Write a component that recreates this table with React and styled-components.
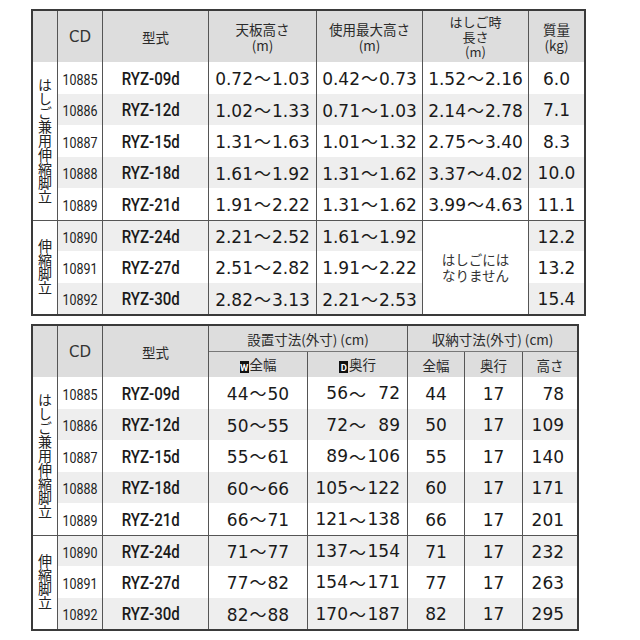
import React from 'react';
import styled, { createGlobalStyle, css } from 'styled-components';

const GlobalStyle = createGlobalStyle`
  *, *::before, *::after { box-sizing: border-box; }
  html, body { margin: 0; padding: 0; background: #ffffff; }
  body {
    font-family: "Noto Sans CJK JP", "Noto Sans", sans-serif;
    color: #1e1e1e;
  }
`;

const Page = styled.div`
  display: flex;
  flex-direction: column;
  align-items: flex-start;
  gap: 8px;
  padding: 9px 0 0 31px;
`;

const Table = styled.table`
  border-collapse: separate;
  border-spacing: 0;
  table-layout: fixed;
  width: ${(p) => p.$width}px;
  border: 2px solid #3a3a3a;
`;

const Col = styled.col`
  width: ${(p) => p.$w}px;
`;

const cellBase = css`
  padding: 0;
  border-right: 1px solid #555;
  text-align: center;
  vertical-align: middle;
  white-space: nowrap;
  &:last-child {
    border-right: none;
  }
`;

const HeadRow = styled.tr`
  height: ${(p) => p.$h}px;
`;

const Th = styled.th`
  ${cellBase};
  background: #dddddd;
  color: #2a2a2a;
  font-family: "Noto Sans CJK JP", sans-serif;
  font-weight: 400;
  font-size: ${(p) => (p.$tight ? 13 : 13.5)}px;
  line-height: ${(p) => (p.$tight ? 15 : 16)}px;
  border-bottom: ${(p) => (p.$underline ? '1px solid #777' : 'none')};
`;

const CdHead = styled.span`
  font-family: "DejaVu Sans", "Noto Sans", sans-serif;
  font-size: 15px;
  color: #333;
`;

const Badge = styled.span`
  display: inline-flex;
  align-items: center;
  justify-content: center;
  width: 9px;
  height: 12px;
  margin-right: 1px;
  background: #111;
  color: #fff;
  font-family: "Roboto", "Liberation Sans", sans-serif;
  font-weight: 700;
  font-size: 9.5px;
  line-height: 1;
  vertical-align: -1px;
  letter-spacing: -0.5px;
`;

const BodyRow = styled.tr`
  height: 31.5px;
  background: ${(p) => (p.$shade ? '#eeeeee' : '#ffffff')};
  & > td {
    border-top: ${(p) => (p.$divider ? '1px solid #555' : 'none')};
  }
`;

const Td = styled.td`
  ${cellBase};
`;

const GroupCell = styled.td`
  ${cellBase};
  background: #ffffff;
`;

const VerticalLabel = styled.div`
  writing-mode: vertical-rl;
  text-orientation: upright;
  margin: 0 auto;
  font-family: "Noto Sans CJK JP", sans-serif;
  font-size: 14px;
  line-height: 1;
  letter-spacing: 0;
  color: #222;
`;

const NoteCell = styled.td`
  ${cellBase};
  background: #ffffff;
  color: #333;
  font-family: "Noto Sans CJK JP", sans-serif;
  font-size: 13.5px;
  line-height: 16px;
`;

const CdText = styled.span`
  display: inline-block;
  transform: scaleX(0.83);
  font-family: "Roboto", "Liberation Sans", sans-serif;
  font-size: 15px;
  color: #222;
`;

const ModelText = styled.span`
  display: inline-block;
  margin-right: ${(p) => p.$shift || 0}px;
  transform: scaleX(0.86);
  font-family: "Roboto", "Liberation Sans", sans-serif;
  font-weight: 500;
  font-size: 17.5px;
  color: #1a1a1a;
`;

const NumText = styled.span`
  display: inline-block;
  font-family: "DejaVu Sans", "Noto Sans CJK JP", sans-serif;
  font-size: 17px;
  color: #1a1a1a;
  text-align: ${(p) => p.$align || 'center'};
  width: 100%;
  padding: ${(p) => (p.$align === 'right' ? '0 13px 0 0' : '0')};
`;

const Wave = styled.span`
  font-family: "Noto Sans CJK JP", sans-serif;
  margin: 0 1px;
`;

const RangeBox = styled.span`
  display: inline-grid;
  grid-template-columns: 33px auto 33px;
  align-items: center;
  font-family: "DejaVu Sans", "Noto Sans CJK JP", sans-serif;
  font-size: 17px;
  color: #1a1a1a;
`;

const RangeNum = styled.span`
  text-align: right;
`;

const W = '\u301C';

const Range = ({ a, b }) => (
  <NumText>
    {a}
    <Wave>{W}</Wave>
    {b}
  </NumText>
);

const AlignedRange = ({ a, b }) => (
  <RangeBox>
    <RangeNum>{a}</RangeNum>
    <Wave>{W}</Wave>
    <RangeNum>{b}</RangeNum>
  </RangeBox>
);

const spec = [
  ['10885', 'RYZ-09d', ['0.72', '1.03'], ['0.42', '0.73'], ['1.52', '2.16'], '6.0'],
  ['10886', 'RYZ-12d', ['1.02', '1.33'], ['0.71', '1.03'], ['2.14', '2.78'], '7.1'],
  ['10887', 'RYZ-15d', ['1.31', '1.63'], ['1.01', '1.32'], ['2.75', '3.40'], '8.3'],
  ['10888', 'RYZ-18d', ['1.61', '1.92'], ['1.31', '1.62'], ['3.37', '4.02'], '10.0'],
  ['10889', 'RYZ-21d', ['1.91', '2.22'], ['1.31', '1.62'], ['3.99', '4.63'], '11.1'],
  ['10890', 'RYZ-24d', ['2.21', '2.52'], ['1.61', '1.92'], null, '12.2'],
  ['10891', 'RYZ-27d', ['2.51', '2.82'], ['1.91', '2.22'], null, '13.2'],
  ['10892', 'RYZ-30d', ['2.82', '3.13'], ['2.21', '2.53'], null, '15.4'],
];

const dims = [
  ['10885', 'RYZ-09d', ['44', '50'], ['56', '72'], '44', '17', '78'],
  ['10886', 'RYZ-12d', ['50', '55'], ['72', '89'], '50', '17', '109'],
  ['10887', 'RYZ-15d', ['55', '61'], ['89', '106'], '55', '17', '140'],
  ['10888', 'RYZ-18d', ['60', '66'], ['105', '122'], '60', '17', '171'],
  ['10889', 'RYZ-21d', ['66', '71'], ['121', '138'], '66', '17', '201'],
  ['10890', 'RYZ-24d', ['71', '77'], ['137', '154'], '71', '17', '232'],
  ['10891', 'RYZ-27d', ['77', '82'], ['154', '171'], '77', '17', '263'],
  ['10892', 'RYZ-30d', ['82', '88'], ['170', '187'], '82', '17', '295'],
];

const groupCell = (i) => {
  if (i === 0)
    return (
      <GroupCell rowSpan={5}>
        <VerticalLabel>はしご兼用伸縮脚立</VerticalLabel>
      </GroupCell>
    );
  if (i === 5)
    return (
      <GroupCell rowSpan={3}>
        <VerticalLabel>伸縮脚立</VerticalLabel>
      </GroupCell>
    );
  return null;
};

const SpecTable = () => (
  <Table $width={555}>
    <colgroup>
      {[25, 45, 106, 108, 106, 106, 55].map((w, i) => (
        <Col key={i} $w={w} />
      ))}
    </colgroup>
    <thead>
      <HeadRow $h={51}>
        <Th />
        <Th>
          <CdHead>CD</CdHead>
        </Th>
        <Th>型式</Th>
        <Th>
          天板高さ
          <br />
          (m)
        </Th>
        <Th>
          使用最大高さ
          <br />
          (m)
        </Th>
        <Th $tight>
          はしご時
          <br />
          長さ
          <br />
          (m)
        </Th>
        <Th>
          質量
          <br />
          (kg)
        </Th>
      </HeadRow>
    </thead>
    <tbody>
      {spec.map((r, i) => (
        <BodyRow key={r[0]} $shade={i % 2 === 1} $divider={i === 5}>
          {groupCell(i)}
          <Td>
            <CdText>{r[0]}</CdText>
          </Td>
          <Td>
            <ModelText $shift={10}>{r[1]}</ModelText>
          </Td>
          <Td>
            <Range a={r[2][0]} b={r[2][1]} />
          </Td>
          <Td>
            <Range a={r[3][0]} b={r[3][1]} />
          </Td>
          {r[4] ? (
            <Td>
              <Range a={r[4][0]} b={r[4][1]} />
            </Td>
          ) : i === 5 ? (
            <NoteCell rowSpan={3}>
              はしごには
              <br />
              なりません
            </NoteCell>
          ) : null}
          <Td>
            <NumText>{r[5]}</NumText>
          </Td>
        </BodyRow>
      ))}
    </tbody>
  </Table>
);

const DimTable = () => (
  <Table $width={548}>
    <colgroup>
      {[25, 45, 106, 99, 100, 57, 58, 54].map((w, i) => (
        <Col key={i} $w={w} />
      ))}
    </colgroup>
    <thead>
      <HeadRow $h={26}>
        <Th rowSpan={2} />
        <Th rowSpan={2}>
          <CdHead>CD</CdHead>
        </Th>
        <Th rowSpan={2}>型式</Th>
        <Th colSpan={2} $underline>
          設置寸法(外寸) (cm)
        </Th>
        <Th colSpan={3} $underline>
          収納寸法(外寸) (cm)
        </Th>
      </HeadRow>
      <HeadRow $h={25}>
        <Th>
          <Badge>W</Badge>全幅
        </Th>
        <Th>
          <Badge>D</Badge>奥行
        </Th>
        <Th>全幅</Th>
        <Th>奥行</Th>
        <Th>高さ</Th>
      </HeadRow>
    </thead>
    <tbody>
      {dims.map((r, i) => (
        <BodyRow key={r[0]} $shade={i % 2 === 1} $divider={i === 5}>
          {groupCell(i)}
          <Td>
            <CdText>{r[0]}</CdText>
          </Td>
          <Td>
            <ModelText $shift={10}>{r[1]}</ModelText>
          </Td>
          <Td>
            <Range a={r[2][0]} b={r[2][1]} />
          </Td>
          <Td>
            <AlignedRange a={r[3][0]} b={r[3][1]} />
          </Td>
          <Td>
            <NumText>{r[4]}</NumText>
          </Td>
          <Td>
            <NumText>{r[5]}</NumText>
          </Td>
          <Td>
            <NumText $align="right">{r[6]}</NumText>
          </Td>
        </BodyRow>
      ))}
    </tbody>
  </Table>
);

export default function App() {
  return (
    <>
      <GlobalStyle />
      <Page>
        <SpecTable />
        <DimTable />
      </Page>
    </>
  );
}
